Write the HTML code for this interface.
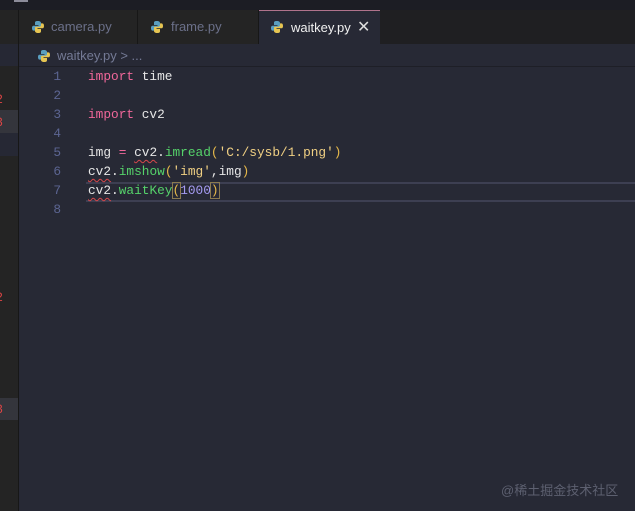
<!DOCTYPE html>
<html><head><meta charset="utf-8"><style>
body{margin:0;width:635px;height:511px;overflow:hidden;background:#272935;position:relative;font-family:"Liberation Sans",sans-serif}
.abs{position:absolute}
.mono{font-family:"Liberation Mono",monospace;font-size:12.8px;white-space:pre}
.tab{position:absolute;top:10px;height:34px;font-size:13px;color:#6b7089;line-height:34px}
.py{position:absolute;width:14px;height:14px}
.ln{position:absolute;left:40px;width:21px;text-align:right;color:#5c6592;font-family:"Liberation Mono",monospace;font-size:12.8px}
.code{position:absolute;left:88px;color:#e6e6e6}
.k{color:#f0679a}.f{color:#55d26a}.s{color:#f1d083}.p{color:#e6b84a}.n{color:#a59bf2}
.sq{text-decoration:underline wavy #d7474b;text-underline-offset:3px;text-decoration-thickness:1px}
</style></head><body>
<svg width="0" height="0" style="position:absolute"><defs><g id="pyi"><path d="M7 1C4 1 4 2 4 3v2h3.5v.7H2.5C1.3 5.7 1 7 1 8s.3 2.6 1.5 2.6H4V9c0-1 .8-1.7 1.7-1.7h3.2C9.8 7.3 10 6.6 10 6V3c0-1-1-2-3-2z" fill="#5a9fc0"/><path d="M7 13c3 0 3-1 3-2V9H6.5v-.7h5c1.200 0 1.5-1.3 1.5-2.3s-.3-2.6-1.5-2.6H10V5c0 1-.8 1.7-1.7 1.7H5.1C4.2 6.7 4 7.4 4 8v3c0 1 1 2 3 2z" fill="#e6c552"/></g></defs></svg>
<div class="abs" style="left:0;top:0;width:635px;height:10px;background:#1c1d24"></div>
<div class="abs" style="left:14px;top:0;width:14px;height:2px;background:#8c8c9a"></div>
<div class="abs" style="left:0;top:10px;width:635px;height:34px;background:#1f1f22"></div>
<div class="abs" style="left:0;top:10px;width:19px;height:501px;background:#242424"></div>
<div class="abs" style="left:18px;top:10px;width:1px;height:501px;background:#171717"></div>
<div class="abs" style="left:0;top:44px;width:18px;height:22px;background:#262834"></div>
<div class="abs" style="left:0;top:110px;width:18px;height:23px;background:#34353c"></div>
<div class="abs" style="left:0;top:133px;width:18px;height:23px;background:#262834"></div>
<div class="abs" style="left:0;top:398px;width:18px;height:22px;background:#34353c"></div>
<div class="abs" style="left:-4px;top:92px;color:#e04545;font-size:12px">2</div>
<div class="abs" style="left:-4px;top:115px;color:#e04545;font-size:12px">3</div>
<div class="abs" style="left:-4px;top:290px;color:#e04545;font-size:12px">2</div>
<div class="abs" style="left:-4px;top:402px;color:#e04545;font-size:12px">3</div>
<div class="tab" style="left:19px;width:118px;background:#242424;border-right:1px solid #171717"><svg class="py" style="left:12px;top:10px" viewBox="0 0 14 14"><use href="#pyi"/></svg><span style="position:absolute;left:32px">camera.py</span></div>
<div class="tab" style="left:138px;width:120px;background:#242424;border-right:1px solid #171717"><svg class="py" style="left:12px;top:10px" viewBox="0 0 14 14"><use href="#pyi"/></svg><span style="position:absolute;left:33px">frame.py</span></div>
<div class="tab" style="left:259px;width:121px;background:#272935;border-top:1px solid #b0738c;height:33px;line-height:33px;color:#f0f0f0"><svg class="py" style="left:11px;top:9px" viewBox="0 0 14 14"><use href="#pyi"/></svg><span style="position:absolute;left:32px">waitkey.py</span><span style="position:absolute;left:98px;font-size:16px;color:#ddd">✕</span></div>
<div class="abs" style="left:19px;top:44px;width:616px;height:22px;background:#272935;border-bottom:1px solid #1e1f27"></div>
<svg class="py" style="left:37px;top:49px" viewBox="0 0 14 14"><use href="#pyi"/></svg>
<div class="abs" style="left:57px;top:48px;font-size:13px;color:#747a95">waitkey.py &gt; ...</div>
<div class="abs" style="left:86px;top:182px;width:549px;height:16px;border-top:2px solid #3d3f52;border-bottom:2px solid #3d3f52"></div>
<div class="ln mono" style="top:69px">1</div>
<div class="ln mono" style="top:88px">2</div>
<div class="ln mono" style="top:107px">3</div>
<div class="ln mono" style="top:126px">4</div>
<div class="ln mono" style="top:145px">5</div>
<div class="ln mono" style="top:164px">6</div>
<div class="ln mono" style="top:183px">7</div>
<div class="ln mono" style="top:202px">8</div>
<div class="code mono" style="top:69px"><span class="k">import</span> time</div>
<div class="code mono" style="top:107px"><span class="k">import</span> cv2</div>
<div class="code mono" style="top:145px">img <span class="k">=</span> <span class="sq">cv2</span>.<span class="f">imread</span><span class="p">(</span><span class="s">'C:/sysb/1.png'</span><span class="p">)</span></div>
<div class="code mono" style="top:164px"><span class="sq">cv2</span>.<span class="f">imshow</span><span class="p">(</span><span class="s">'img'</span>,img<span class="p">)</span></div>
<div class="code mono" style="top:183px"><span class="sq">cv2</span>.<span class="f">waitKey</span><span class="p" style="outline:1px solid #8a7a50">(</span><span class="n">1000</span><span class="p" style="outline:1px solid #8a7a50">)</span></div>
<div class="abs" style="left:501px;top:480px;font-size:13px;color:#5d6070;font-family:'Liberation Sans','Noto Sans CJK SC',sans-serif">@稀土掘金技术社区</div>
</body></html>
